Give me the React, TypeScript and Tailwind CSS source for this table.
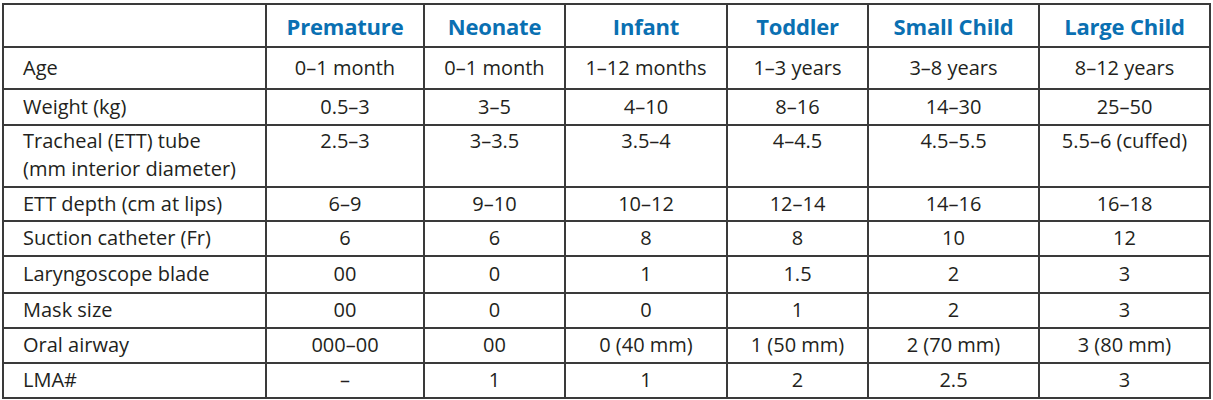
const heads = ["Premature", "Neonate", "Infant", "Toddler", "Small Child", "Large Child"];

const rows: { label: string[]; cells: string[]; h: string; top?: boolean }[] = [
  { label: ["Age"], cells: ["0–1 month", "0–1 month", "1–12 months", "1–3 years", "3–8 years", "8–12 years"], h: "h-[42px]" },
  { label: ["Weight (kg)"], cells: ["0.5–3", "3–5", "4–10", "8–16", "14–30", "25–50"], h: "h-[36px]" },
  {
    label: ["Tracheal (ETT) tube", "(mm interior diameter)"],
    cells: ["2.5–3", "3–3.5", "3.5–4", "4–4.5", "4.5–5.5", "5.5–6 (cuffed)"],
    h: "h-[62px]",
    top: true,
  },
  { label: ["ETT depth (cm at lips)"], cells: ["6–9", "9–10", "10–12", "12–14", "14–16", "16–18"], h: "h-[34px]" },
  { label: ["Suction catheter (Fr)"], cells: ["6", "6", "8", "8", "10", "12"], h: "h-[35px]" },
  { label: ["Laryngoscope blade"], cells: ["00", "0", "1", "1.5", "2", "3"], h: "h-[37px]" },
  { label: ["Mask size"], cells: ["00", "0", "0", "1", "2", "3"], h: "h-[35px]" },
  { label: ["Oral airway"], cells: ["000–00", "00", "0 (40 mm)", "1 (50 mm)", "2 (70 mm)", "3 (80 mm)"], h: "h-[35px]" },
  { label: ["LMA#"], cells: ["–", "1", "1", "2", "2.5", "3"], h: "h-[35px]" },
];

const widths = ["w-[263px]", "w-[158px]", "w-[141px]", "w-[162px]", "w-[141px]", "w-[171px]", "w-[171px]"];

export default function App() {
  return (
    <div className="w-[1213px] h-[400px] bg-white pl-[2px] pt-[3px] font-['Open_Sans',sans-serif] text-[#231f20]">
      <table className="table-fixed border-collapse w-[1207px]">
        <colgroup>
          {widths.map((w, i) => (
            <col key={i} className={w} />
          ))}
        </colgroup>
        <thead>
          <tr className="h-[43px]">
            <th className="border-2 border-[#3a3a3a]" />
            {heads.map((h) => (
              <th key={h} className="border-2 border-[#3a3a3a] text-center align-middle text-[22px] font-bold tracking-[-0.2px] text-[#0a70b2] pt-[1px]">
                {h}
              </th>
            ))}
          </tr>
        </thead>
        <tbody>
          {rows.map((r) => (
            <tr key={r.label[0]} className={r.h}>
              <td className={`border-2 border-[#3a3a3a] pl-[19px] text-[20px] leading-[28px] ${r.top ? "align-top pt-[1px]" : "align-middle pb-[1px]"}`}>
                {r.label.map((l) => (
                  <div key={l}>{l}</div>
                ))}
              </td>
              {r.cells.map((c, i) => (
                <td key={i} className={`border-2 border-[#3a3a3a] text-center text-[20px] leading-[28px] ${r.top ? "align-top pt-[1px]" : "align-middle pb-[1px]"}`}>
                  {c}
                </td>
              ))}
            </tr>
          ))}
        </tbody>
      </table>
    </div>
  );
}
